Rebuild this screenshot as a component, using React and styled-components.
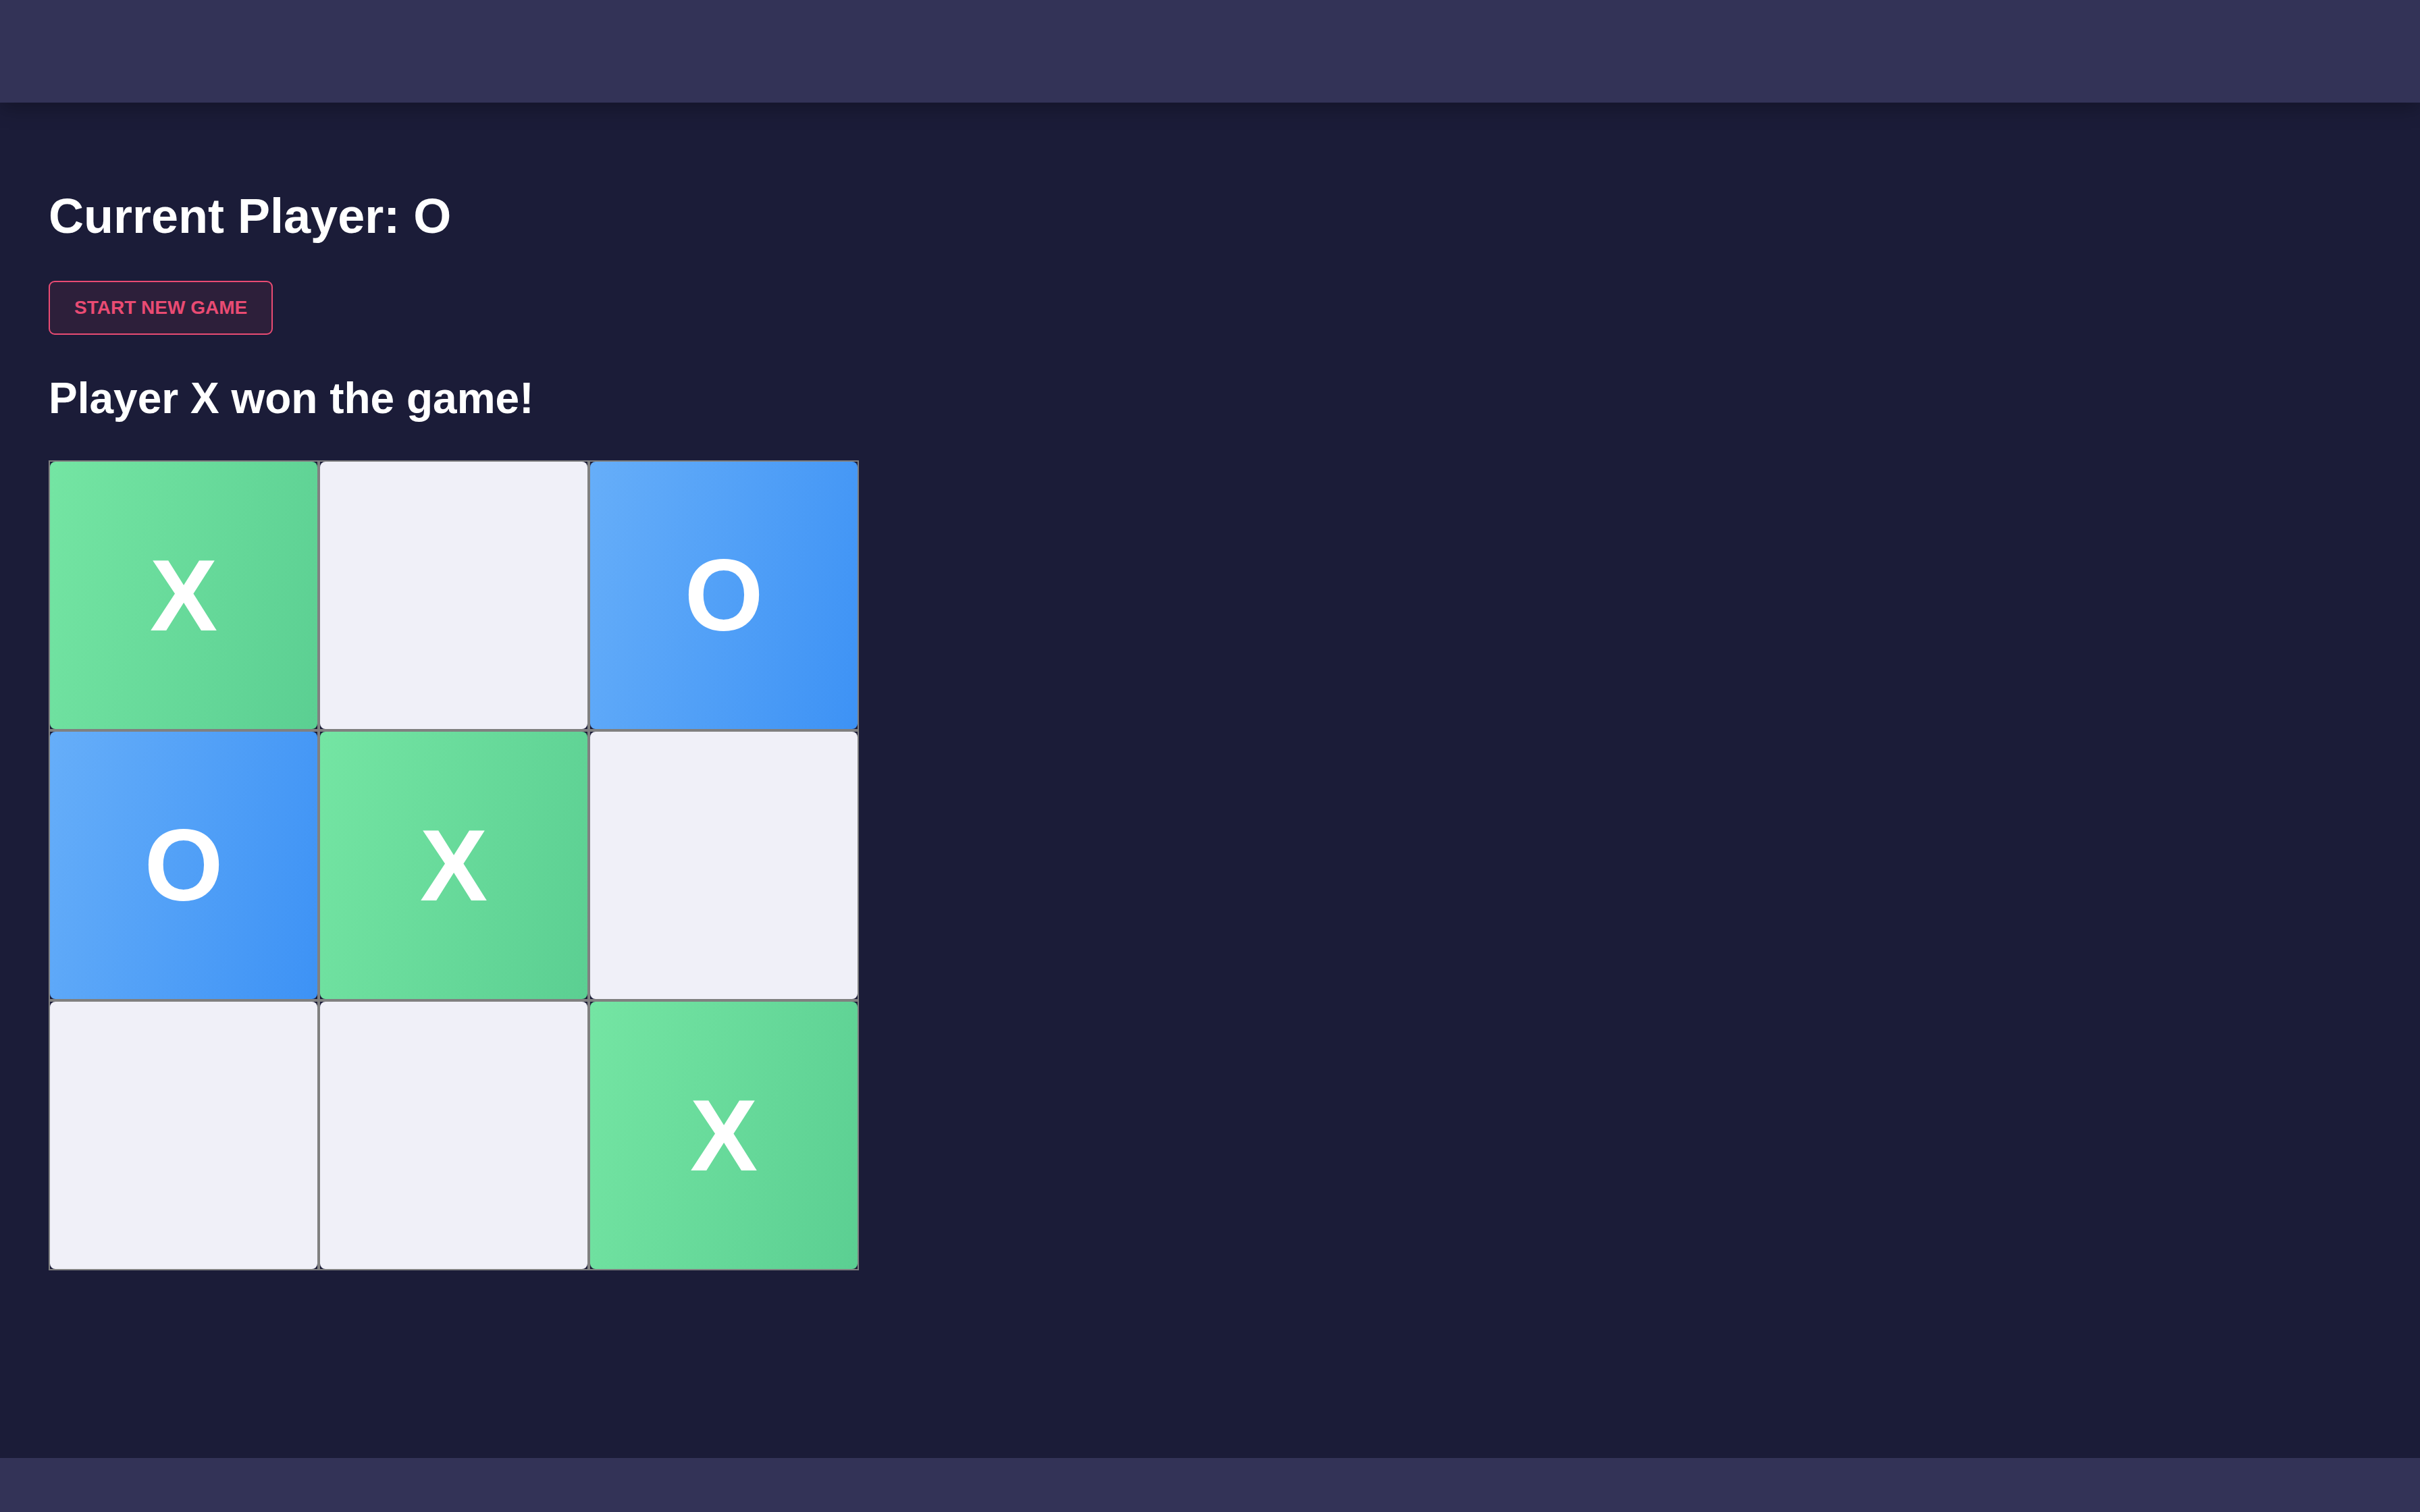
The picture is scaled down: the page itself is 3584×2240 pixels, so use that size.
import styled, { createGlobalStyle } from 'styled-components';

const GlobalStyle = createGlobalStyle`
  html,
  body {
    margin: 0;
    padding: 0;
    height: 100%;
  }

  body {
    background: #1b1c38;
    font-family: 'Liberation Sans', Arial, Helvetica, sans-serif;
    color: #ffffff;
  }

  #root {
    min-height: 100%;
  }
`;

const Root = styled.div`
  display: flex;
  flex-direction: column;
  min-height: 100vh;
`;

const Header = styled.header`
  height: 152px;
  flex-shrink: 0;
  background: #333357;
  box-shadow: 0 8px 28px rgba(0, 0, 0, 0.28);
  position: relative;
  z-index: 1;
`;

const Main = styled.main`
  flex: 1;
  display: flex;
  flex-direction: column;
  align-items: flex-start;
  padding: 128px 72px 0;
`;

const Title = styled.h1`
  margin: 0;
  font-size: 72px;
  font-weight: 700;
  line-height: 80px;
`;

const NewGameButton = styled.button`
  margin: 56px 0 0;
  padding: 23px 36px;
  font-family: inherit;
  font-size: 28px;
  font-weight: 700;
  line-height: 30px;
  text-transform: uppercase;
  color: #e94b73;
  background: #2d1f3a;
  border: 2px solid #e94b73;
  border-radius: 9px;
  cursor: pointer;
`;

const Status = styled.h2`
  margin: 58px 0 0;
  font-size: 64px;
  font-weight: 700;
  line-height: 72px;
`;

const Board = styled.div`
  margin: 56px 0 0;
  display: grid;
  grid-template-columns: repeat(3, 400px);
  grid-template-rows: repeat(3, 400px);
`;

const Cell = styled.div`
  box-sizing: border-box;
  border: 2px solid #808080;
  background: #1b1c38;
`;

const fills = {
  X: 'linear-gradient(105deg, #74e5a3 0%, #5bcf92 100%)',
  O: 'linear-gradient(105deg, #66aef9 0%, #3d92f5 100%)',
  '': '#f0f0f8',
};

const CellFace = styled.div`
  width: 100%;
  height: 100%;
  border-radius: 8px;
  background: ${(props) => fills[props.$mark]};
  display: flex;
  align-items: center;
  justify-content: center;
  font-size: 150px;
  font-weight: 700;
  color: #ffffff;
  line-height: 1;
`;

const Footer = styled.footer`
  height: 80px;
  flex-shrink: 0;
  background: #333357;
`;

const board = ['X', '', 'O', 'O', 'X', '', '', '', 'X'];

const App = () => (
  <Root>
    <GlobalStyle />
    <Header />
    <Main>
      <Title>Current Player: O</Title>
      <NewGameButton type="button">Start new game</NewGameButton>
      <Status>Player X won the game!</Status>
      <Board>
        {board.map((mark, i) => (
          <Cell key={i}>
            <CellFace $mark={mark}>{mark}</CellFace>
          </Cell>
        ))}
      </Board>
    </Main>
    <Footer />
  </Root>
);

export default App;
